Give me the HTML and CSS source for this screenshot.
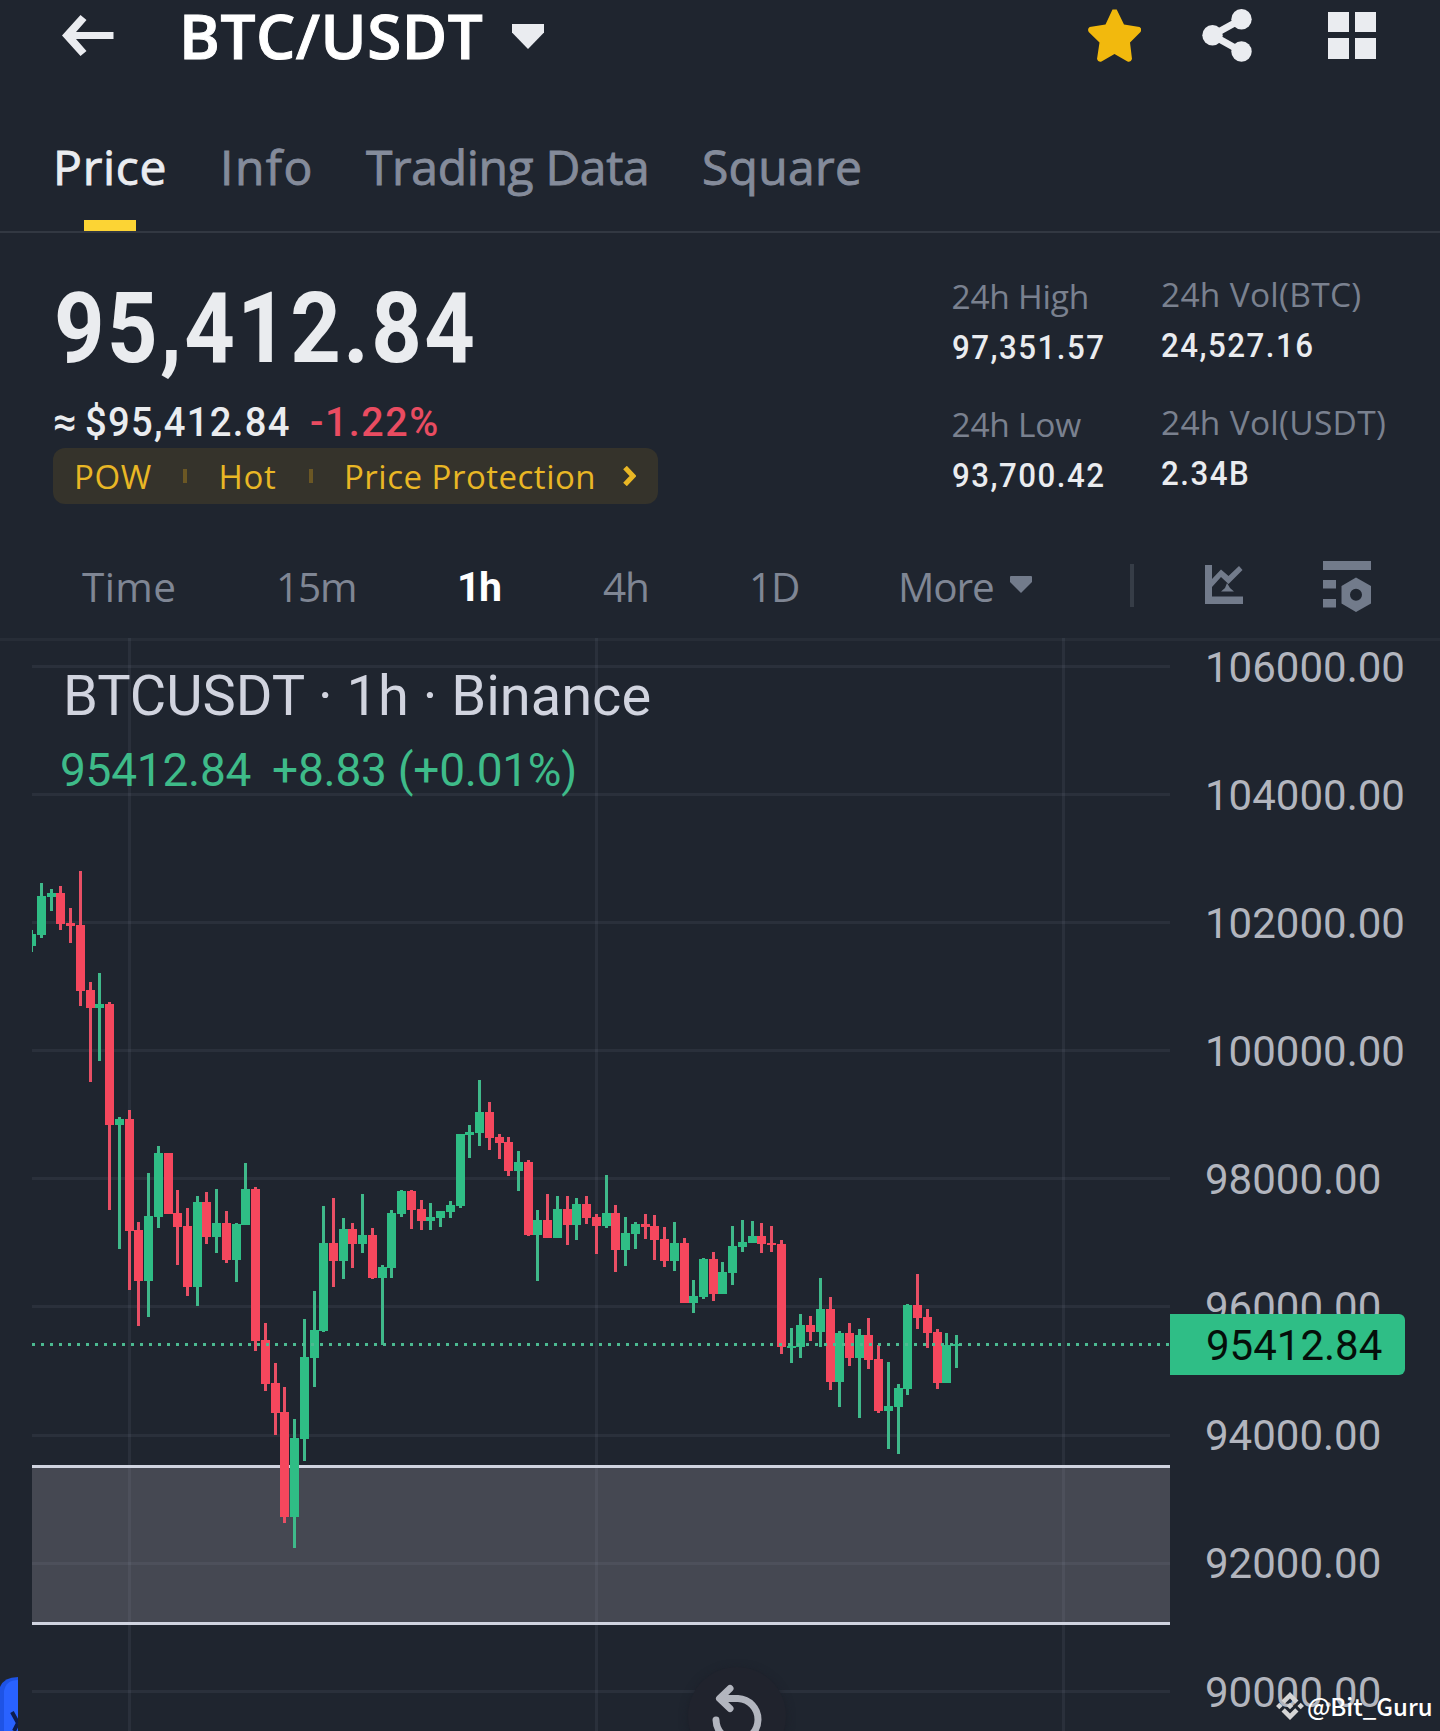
FILE: index.html
```html
<!DOCTYPE html>
<html lang="en">
<head>
<meta charset="utf-8">
<title>BTC/USDT</title>
<link rel="stylesheet" href="styles.css">
</head>
<body>
<header class="topbar">
  <svg class="back" width="52" height="42" viewBox="0 0 52 42"><path d="M0 20.5 18.5 0 24.5 5 14 17H51.500V24H14L24.500 36 18.500 41Z"/></svg>
  <h1 class="pair">BTC/USDT</h1>
  <svg class="pair-caret" width="32" height="25" viewBox="0 0 32 25"><path d="M0 0H32V8.500L16 25 0 8.500Z"/></svg>
  <div class="actions">
    <svg class="star" width="53" height="53" viewBox="1088 8.500 53 53"><path d="M1112.500 9H1116.700L1124 24 1139.500 26.500Q1142.500 28.500 1140.500 31.500L1130 42 1132 58.500Q1131 62 1127.500 61L1114.500 53.500 1101.500 61Q1098 62 1097 58.500L1099.500 42 1088.700 31.500Q1087 28.500 1089.700 26.500L1105.500 24Z"/></svg>
    <svg class="share" width="50" height="53" viewBox="1202.500 8.500 50 53"><path d="M1242 18.700 1213 34.800 1242 51" class="share-line"/><circle cx="1242" cy="18.800" r="10.200"/><circle cx="1213" cy="34.800" r="10.200"/><circle cx="1242" cy="51" r="10.200"/></svg>
    <div class="tiles"><i></i><i></i><i></i><i></i></div>
  </div>
</header>

<nav class="tabs">
  <span class="tab active">Price</span>
  <span class="tab info">Info</span>
  <span class="tab trading">Trading Data</span>
  <span class="tab">Square</span>
</nav>

<section class="summary">
  <div class="quote">
    <div class="last">95,412.84</div>
    <div class="fiat"><span class="approx">≈</span><span class="usd">$95,412.84</span><span class="change">-1.22%</span></div>
    <div class="tags">
      <span class="tag pow">POW</span><i class="sep"></i>
      <span class="tag hot">Hot</span><i class="sep"></i>
      <span class="tag protection">Price Protection</span>
      <svg class="chevron" width="13" height="20" viewBox="0 0 13 20"><path d="M2 1.500 10 10 2 18.500"/></svg>
    </div>
  </div>
  <div class="stats">
    <dl><dt>24h High</dt><dd>97,351.57</dd><dt>24h Low</dt><dd>93,700.42</dd></dl>
    <dl class="volume"><dt>24h Vol(BTC)</dt><dd>24,527.16</dd><dt>24h Vol(USDT)</dt><dd>2.34B</dd></dl>
  </div>
</section>

<nav class="intervals">
  <span class="time">Time</span>
  <span>15m</span>
  <span class="current">1h</span>
  <span>4h</span>
  <span>1D</span>
  <span>More</span>
  <svg class="more-caret" width="22" height="17" viewBox="0 0 22 17"><path d="M1 0H21Q22 0 22 1V6L11 17 0 6V1Q0 0 1 0Z"/></svg>
  <i class="divider"></i>
  <svg class="tool" width="38" height="39" viewBox="0 0 38 39"><path d="M0 0H7V14L16 4.500 23.500 11 34 1 37.500 5 23.500 19 16 12 7 22V31.500H38V39H0Z"/><path d="M22 18 25 23 29 26.500H16L20 23Z"/></svg>
  <svg class="tool" width="48" height="51" viewBox="0 0 48 51"><path d="M0 0H48V9H0ZM0 19H13V27.500H0ZM0 38H13V46.500H0Z"/><path fill-rule="evenodd" d="M33 16.500 48 25V42.500L33 51 18.500 42.500V25ZM33 27.700A6 6 0 1 0 33 39.700 6 6 0 1 0 33 27.700Z"/></svg>
</nav>

<main class="chart">
  <svg class="plot" id="plot" width="1170" height="1093" viewBox="0 638 1170 1093"></svg>
  <div class="axis">
    <span>106000.00</span><span>104000.00</span><span>102000.00</span><span>100000.00</span><span>98000.00</span><span>96000.00</span><span>94000.00</span><span>92000.00</span><span>90000.00</span>
  </div>
  <div class="legend">
    <div class="symbol">BTCUSDT · 1h · Binance</div>
    <div class="delta"><span>95412.84</span><span>+8.83 (+0.01%)</span></div>
  </div>
  <div class="price-label">95412.84</div>
  <div class="reset"><svg width="60" height="60" viewBox="0 0 60 60"><path d="M14 5.500 3.500 15.500 14 25.500M5 15.500H22A21 21 0 1 1 0 37"/></svg></div>
  <svg class="handle" width="18" height="54" viewBox="0 0 18 54"><path class="handle-edge" d="M0 10Q4 0 18 0V54H0Z"/><path class="handle-face" d="M4 54V14Q6 3 18 3V54Z"/><path class="handle-arrow" d="M12 35 18 46 14 54"/></svg>
  <div class="watermark">
    <svg width="28" height="28" viewBox="0 0 28 28"><path d="M14 0 22.500 8.500 19.200 11.800 14 6.600 8.800 11.800 5.500 8.500ZM14 28 5.500 19.500 8.800 16.200 14 21.400 19.200 16.200 22.500 19.500ZM14 10.700 17.300 14 14 17.300 10.700 14ZM3.300 10.700 6.600 14 3.300 17.300 0 14ZM24.700 10.700 28 14 24.700 17.300 21.400 14Z"/></svg>
    <span>@Bit_Guru</span>
  </div>
</main>
<script src="chart.js"></script>
</body>
</html>
```
FILE: styles.css
```css
* { box-sizing: border-box; margin: 0; padding: 0; }

body {
  width: 1440px;
  height: 1731px;
  overflow: hidden;
  background: #1f252f;
  color: #eaecef;
  font-family: "Open Sans", "Noto Sans", sans-serif;
  white-space: nowrap;
}
svg { display: block; flex: none; }

/* Top bar */
.topbar { display: flex; align-items: center; height: 70px; padding: 0 64px 0 62px; fill: #eaecf0; }
.back { margin-top: 2px; }
.pair { width: 333px; margin-left: 65px; font-size: 62px; font-weight: 600; line-height: 70px; letter-spacing: .55px; color: #fff; -webkit-text-stroke: 1px #fff; }
.pair-caret { margin-top: 2px; }
.actions { display: flex; align-items: center; margin-left: auto; }
.star { fill: #f2b90d; }
.share { margin: 0 76px 0 61px; }
.share-line { fill: none; stroke: #eaecf0; stroke-width: 7; }
.tiles { display: grid; grid-template-columns: 21px 21px; grid-auto-rows: 20.500px; gap: 6px; }
.tiles i { background: #eaecf0; }

/* Section tabs */
.tabs {
  display: grid;
  grid-template-columns: 167px 146px 336px auto;
  height: 163px;
  padding: 67px 0 0 53px;
  border-bottom: 2px solid #323842;
  font-size: 48px;
  font-weight: 500;
  line-height: 60px;
  color: #848b9a;
  -webkit-text-stroke: .9px currentColor;
}
.tab { letter-spacing: .3px; }
.tab.info { letter-spacing: 1.500px; }
.tab.trading { letter-spacing: -.35px; }
.tab.active { display: flex; flex-direction: column; letter-spacing: .75px; color: #eaecf0; }
.tab.active::after { content: ""; width: 52px; height: 11px; margin: 23px 0 0 30.500px; background: #fcd434; }

/* Price summary */
.summary { display: flex; justify-content: space-between; height: 302px; padding: 0 55px 0 53px; }
.quote { padding-top: 47px; }
.last { margin-left: 1px; font: 700 98px/98px Roboto, sans-serif; letter-spacing: 2.700px; transform: scaleX(.9); transform-origin: 0 0; }
.fiat { display: flex; height: 50px; margin-top: 19px; font: 500 41.500px/50px Roboto, sans-serif; }
.approx { width: 32px; }
.usd { width: 225px; letter-spacing: 1.400px; transform: scaleX(.92); transform-origin: 0 0; }
.change { color: #e94c61; letter-spacing: 1.600px; transform: scaleX(.95); transform-origin: 0 0; }
.tags {
  display: flex;
  align-items: center;
  width: 605px;
  height: 56px;
  margin-top: 1px;
  padding: 0 22px 0 21px;
  border-radius: 12px;
  background: #35332b;
  color: #e9b725;
  font-size: 33px;
  line-height: 56px;
}
.tag { padding-top: 2px; }
.pow { width: 109px; letter-spacing: .6px; }
.hot { width: 90px; letter-spacing: .7px; }
.protection { letter-spacing: .5px; }
.sep { width: 4px; height: 14px; margin-right: 31.500px; background: #6b5724; }
.chevron { margin-left: auto; fill: none; stroke: #e9b725; stroke-width: 5; }

.stats { display: flex; padding-top: 43px; }
.stats dl { width: 209.500px; }
.stats dl.volume { width: 224px; margin-top: -2px; }
.stats dt { font-size: 33.500px; line-height: 40px; color: #7a818f; letter-spacing: -.25px; }
.stats .volume dt { letter-spacing: .28px; }
.stats dd { margin: 11px 0 37px; font: 500 34px/40px Roboto, sans-serif; letter-spacing: 1.600px; transform: scaleX(.92); transform-origin: 0 0; }

/* Interval picker */
.intervals {
  display: grid;
  grid-template-columns: 194px 181px 146px 146px 149px 112px 120px 75px 118px 48px;
  align-items: center;
  height: 103px;
  padding-left: 82px;
  font-size: 40.500px;
  line-height: 103px;
  letter-spacing: -1.100px;
  color: #7f8694;
  fill: #727b8b;
}
.intervals .time { letter-spacing: .4px; }
.intervals .current { font: 700 41px/103px Roboto, sans-serif; letter-spacing: -1.500px; color: #fff; transform: translateY(1px); }
.more-caret { margin-top: -5px; }
.divider { width: 4px; height: 43px; margin-top: -2px; background: #363d47; }
.tool { margin-top: -4px; }
.tool + .tool { margin-top: 0; }

/* Chart */
.chart { position: relative; display: flex; height: 1093px; overflow: hidden; font-family: Roboto, sans-serif; }
.chart::before { content: ""; position: absolute; inset: 0 0 auto; height: 3px; background: #272d37; }
.plot { position: relative; shape-rendering: crispEdges; }
.grid { fill: #a8b2c4; fill-opacity: .085; }
.zone { fill: #454852; }
.zone-edge { fill: #d0d4e0; }
.up { fill: #2fbd85; }
.up .wick { fill: #3fb98a; }
.down { fill: #f5475d; }
.down .wick { fill: #e84f65; }
.last-line { fill: #4cba91; }

.axis {
  display: grid;
  grid-auto-rows: 128.070px;
  align-content: start;
  margin: -34px 0 0 35px;
  font-size: 42px;
  line-height: 128px;
  color: #b2b5be;
}
.legend { position: absolute; left: 60px; top: 24px; }
.symbol { margin-left: 3px; font-size: 56px; line-height: 68px; color: #d1d4df; }
.delta { display: flex; gap: 21px; margin-top: 10px; font-size: 46px; line-height: 60px; letter-spacing: -.25px; color: #3ebb89; }
.price-label {
  position: absolute;
  left: 1170px;
  top: 676px;
  width: 235px;
  height: 61px;
  padding-left: 36px;
  border-radius: 0 6px 6px 0;
  background: #2fbe86;
  color: #050f0a;
  font-size: 42px;
  line-height: 64px;
}
.reset {
  position: absolute;
  left: 688px;
  top: 1029px;
  width: 98px;
  height: 98px;
  padding: 16px 0 0 28px;
  border-radius: 50%;
  background: #20232d;
  box-shadow: 0 2px 8px #1b1f29;
}
.reset svg { overflow: visible; fill: none; stroke: #b2b5be; stroke-width: 7; stroke-linecap: round; stroke-linejoin: round; }
.handle { position: absolute; left: 0; top: 1039px; }
.handle-edge { fill: #1e53e5; }
.handle-face { fill: #2962ff; }
.handle-arrow { fill: none; stroke: #0d1c4d; stroke-width: 4; }
.watermark {
  position: absolute;
  left: 1276px;
  top: 1050px;
  display: flex;
  align-items: center;
  gap: 3px;
  font: 500 24px/36px "Noto Sans CJK SC", "Noto Sans", sans-serif;
  color: #fff;
  fill: #d5d5d5;
}
```
FILE: chart.js
```js
// Each candle: direction, then the y of its high, body top, body bottom and low.
const candles = `
u930,934,946,952 u883,896,935,938 u889,893,897,911 d886,893,924,930 d908,923,926,943
d871,925,991,1006 d982,990,1008,1082 u973,1004,1008,1061 d1002,1004,1125,1210 u1117,1119,1125,1249
d1110,1119,1231,1290 d1222,1230,1281,1326 u1173,1216,1281,1317 u1146,1153,1217,1228 d1153,1153,1214,1214
d1190,1213,1227,1265 d1208,1226,1287,1296 u1196,1202,1287,1306 d1192,1202,1237,1244 u1189,1223,1237,1253
d1211,1223,1260,1263 u1223,1224,1260,1282 u1163,1189,1225,1225 d1187,1189,1341,1351 d1323,1340,1384,1391
d1363,1383,1413,1435 d1387,1412,1517,1523 u1419,1438,1517,1548 u1319,1357,1439,1461 u1291,1330,1358,1387
u1206,1243,1331,1332 d1198,1243,1261,1287 u1218,1229,1261,1279 d1223,1229,1244,1268 u1194,1235,1244,1253
d1228,1235,1278,1279 u1265,1267,1278,1345 u1210,1213,1268,1278 u1190,1191,1214,1217 d1190,1191,1210,1229
d1200,1209,1221,1230 u1203,1217,1221,1230 u1211,1211,1218,1227 u1201,1205,1212,1218 u1134,1134,1206,1208
u1125,1132,1135,1158 u1080,1112,1133,1146 d1102,1112,1138,1150 d1134,1137,1143,1159 d1137,1142,1171,1176
u1151,1162,1171,1191 d1160,1162,1235,1236 u1210,1220,1235,1281 d1194,1220,1238,1238 u1196,1209,1238,1238
d1196,1209,1225,1245 u1198,1204,1225,1240 d1196,1204,1218,1224 d1214,1217,1226,1254 u1175,1213,1226,1228
d1205,1213,1250,1272 u1217,1233,1250,1266 u1222,1224,1234,1249 d1214,1224,1227,1239 d1215,1226,1240,1260
d1227,1239,1261,1267 u1222,1243,1261,1271 d1238,1243,1303,1303 u1280,1296,1303,1313 u1258,1259,1297,1299
d1252,1259,1294,1301 u1262,1272,1294,1294 u1226,1246,1273,1285 u1220,1242,1247,1252 u1221,1236,1243,1243
d1223,1236,1244,1253 d1226,1243,1245,1252 d1240,1244,1347,1354 u1328,1346,1348,1363 u1314,1325,1347,1358
d1316,1325,1332,1341 u1278,1309,1332,1347 d1297,1309,1382,1390 u1331,1333,1382,1407 d1323,1333,1358,1366
u1329,1335,1358,1418 d1318,1335,1360,1369 d1345,1359,1411,1413 u1362,1406,1411,1449 u1384,1388,1407,1454
u1304,1305,1389,1395 d1274,1305,1318,1329 d1309,1317,1333,1348 d1329,1332,1383,1389 u1333,1345,1383,1383
u1335,1344,1346,1368`.trim().split(/\s+/);

const LEFT = 32, RIGHT = 1170, STEP = 9.736;
const rect = (cls, x, y, w, h) => `<rect class="${cls}" x="${x}" y="${y}" width="${w}" height="${h}"/>`;

const zone = rect('zone', LEFT, 1465, RIGHT - LEFT, 160);
const edges = rect('zone-edge', LEFT, 1465, RIGHT - LEFT, 3) + rect('zone-edge', LEFT, 1622, RIGHT - LEFT, 3);

let grid = '';
for (let i = 0; i < 9; i++) grid += rect('grid', LEFT, Math.round(665.1 + i * 128.07), RIGHT - LEFT, 3);
for (const x of [128, 595, 1062]) grid += rect('grid', x, 638, 3, 1093);

const bars = candles.map((c, i) => {
  const [high, top, bottom, low] = c.slice(1).split(',').map(Number);
  const x = Math.round(27.2 + i * STEP);
  const bodyX = Math.max(x, LEFT);
  const wickX = Math.max(x + 3, LEFT);
  return `<g class="${c[0] === 'u' ? 'up' : 'down'}">` +
    rect('wick', wickX, high, x + 6 - wickX, low - high) +
    rect('body', bodyX, top, x + 9 - bodyX, bottom - top) + '</g>';
}).join('');

let dots = '';
for (let x = LEFT; x < RIGHT; x += 9) dots += rect('last-line', x, 1343, 3, 3);

document.getElementById('plot').innerHTML = zone + grid + edges + bars + dots;
```
